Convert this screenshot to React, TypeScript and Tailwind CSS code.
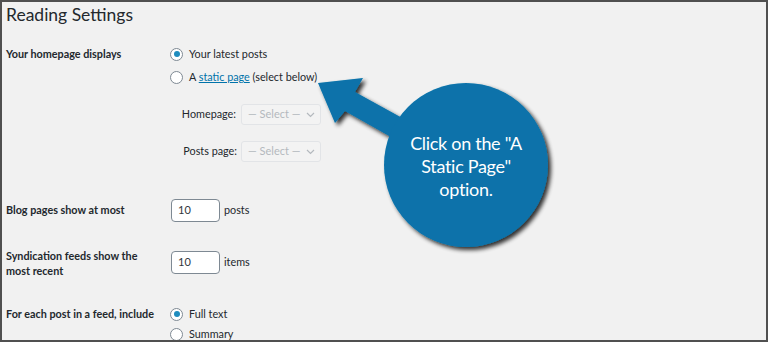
import React from "react";

function Radio({ checked }: { checked?: boolean }) {
  return (
    <span className="w-[13px] h-[13px] rounded-full border border-[#7e8993] bg-white flex items-center justify-center shrink-0">
      {checked && <span className="w-[6px] h-[6px] rounded-full bg-[#1e8cbe]" />}
    </span>
  );
}

function Select() {
  return (
    <div className="w-[80px] h-[21px] border border-[#e2e4e7] rounded-[3px] bg-[#f3f3f3] flex items-center pl-[6px] pr-[5px] text-[#b4b9be] text-[11px] whitespace-nowrap">
      <span className="flex-1">— Select —</span>
      <svg width="9" height="6" viewBox="0 0 9 6" fill="none">
        <path d="M1 1l3.5 3.5L8 1" stroke="#b4b9be" strokeWidth="1.2" />
      </svg>
    </div>
  );
}

function NumInput() {
  return (
    <div className="w-[49px] h-[23px] border border-[#7e8993] rounded-[4px] bg-white flex items-center pl-[6px] text-[11px] text-[#32373c] shrink-0">
      10
    </div>
  );
}

export default function App() {
  return (
    <div
      className="relative w-[768px] h-[342px] overflow-hidden bg-[#f1f1f1] border-2 border-[#505050] text-[#23282d]"
      style={{ fontFamily: 'Lato, "Open Sans", sans-serif' }}
    >
      <div className="pl-[4px] h-[26px] text-[17.5px] leading-[26px] text-[#23282d] whitespace-nowrap">Reading Settings</div>

      <div className="flex pl-[4px] mt-[19px]">
        <div className="w-[164px] text-[10.8px] font-bold leading-[14px] whitespace-nowrap">Your homepage displays</div>
        <div className="flex flex-col">
          <div className="flex items-center gap-[6px] h-[14px] text-[10.8px] whitespace-nowrap">
            <Radio checked />
            <span>Your latest posts</span>
          </div>
          <div className="flex items-center gap-[6px] h-[14px] mt-[9px] text-[10.8px] whitespace-nowrap">
            <Radio />
            <span>
              A <span className="text-[#0073aa] underline">static page</span> (select below)
            </span>
          </div>
          <div className="flex items-center justify-end mt-[20px] w-[151px] gap-[5px] text-[10.8px] whitespace-nowrap">
            <span>Homepage:</span>
            <Select />
          </div>
          <div className="flex items-center justify-end mt-[16px] w-[151px] gap-[4px] text-[10.8px] whitespace-nowrap">
            <span>Posts page:</span>
            <Select />
          </div>
        </div>
      </div>

      <div className="flex items-center pl-[4px] mt-[37px]">
        <div className="w-[165px] text-[10.8px] font-bold whitespace-nowrap">Blog pages show at most</div>
        <NumInput />
        <span className="ml-[4px] text-[10.8px]">posts</span>
      </div>

      <div className="flex items-start pl-[4px] mt-[29px] h-[23px]">
        <div className="w-[165px] text-[10.8px] font-bold leading-[15px] mt-[-3px] whitespace-nowrap">
          Syndication feeds show the
          <br />
          most recent
        </div>
        <div className="flex items-center h-[23px]">
          <NumInput />
          <span className="ml-[4px] text-[10.8px]">items</span>
        </div>
      </div>

      <div className="flex pl-[4px] mt-[33px]">
        <div className="w-[164px] text-[10.8px] font-bold leading-[14px] whitespace-nowrap">For each post in a feed, include</div>
        <div className="flex flex-col">
          <div className="flex items-center gap-[6px] h-[14px] text-[10.8px] whitespace-nowrap">
            <Radio checked />
            <span>Full text</span>
          </div>
          <div className="flex items-center gap-[6px] h-[14px] mt-[6px] text-[10.8px] whitespace-nowrap">
            <Radio />
            <span>Summary</span>
          </div>
        </div>
      </div>

      {/* Annotation arrow */}
      <svg
        className="absolute left-0 top-0 pointer-events-none"
        width="768"
        height="342"
        viewBox="0 0 768 342"
      >
        <defs>
          <filter id="sh" x="-20%" y="-20%" width="140%" height="140%">
            <feGaussianBlur in="SourceAlpha" stdDeviation="2" />
            <feOffset dx="3" dy="3" result="b" />
            <feComponentTransfer>
              <feFuncA type="linear" slope="0.8" />
            </feComponentTransfer>
            <feMerge>
              <feMergeNode />
              <feMergeNode in="SourceGraphic" />
            </feMerge>
          </filter>
        </defs>
        <g filter="url(#sh)" fill="#0872aa">
          <polygon points="316,81 361,76 353,90 422,128 412,148 343,109 333,121" />
          <circle cx="464" cy="163" r="82" />
        </g>
      </svg>
      <div
        className="absolute left-[382px] top-[130px] w-[164px] text-center text-white text-[18px] tracking-[-0.3px] leading-[23px] whitespace-nowrap"
        style={{ fontFamily: 'Lato, "Open Sans", sans-serif' }}
      >
        Click on the "A
        <br />
        Static Page"
        <br />
        option.
      </div>
    </div>
  );
}
